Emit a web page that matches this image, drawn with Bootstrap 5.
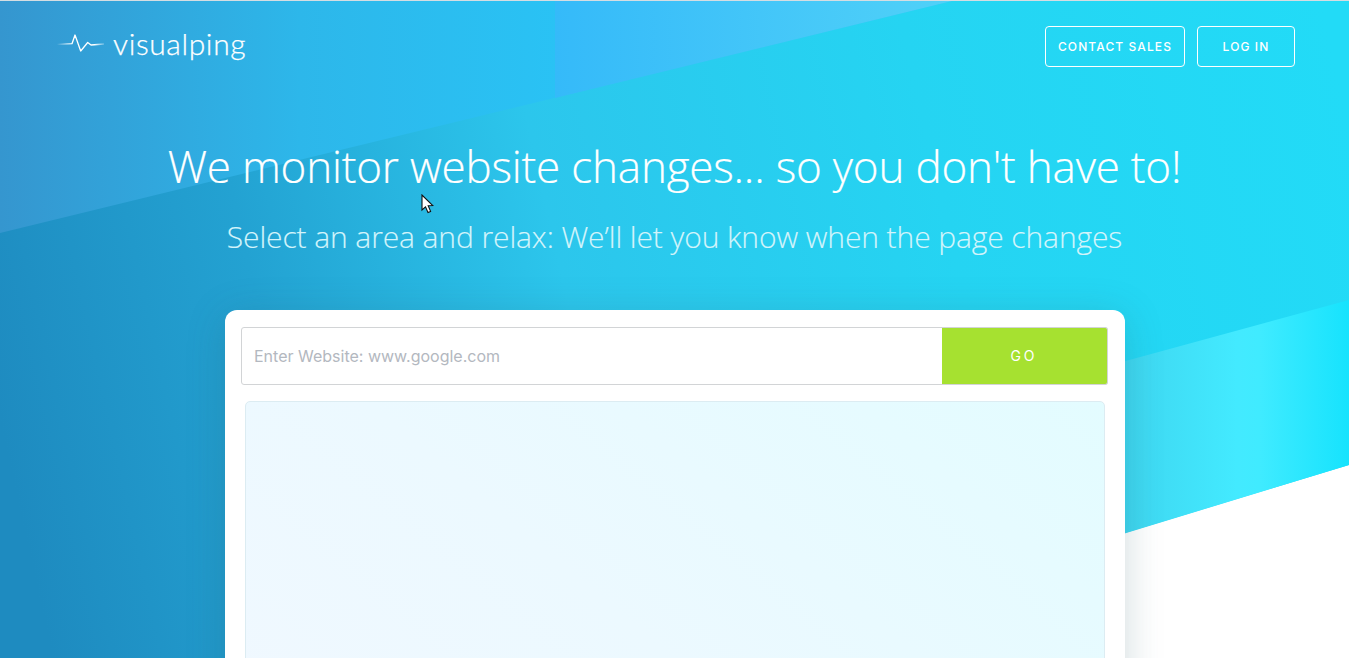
<!DOCTYPE html>
<html lang="en">
<head>
<meta charset="utf-8">
<title>visualping</title>
<link href="https://cdn.jsdelivr.net/npm/bootstrap@5.3.0/dist/css/bootstrap.min.css" rel="stylesheet">
<style>
html,body{height:100%;overflow:hidden;background:#fff}
.vp-hero{position:relative;height:658px;overflow:hidden;border-top:1px solid #d5dde2;margin-right:1px}
.vp-bg{position:absolute;left:0;top:0;width:1349px;height:658px}
.vp-content{position:relative}
.vp-nav{padding:0 54px 0 57px;height:66px;margin-top:25px}
.vp-logo{gap:9px;color:#fff;text-decoration:none;font-family:Lato,sans-serif;font-size:30px;font-weight:300;line-height:1;margin-top:3px;-webkit-text-stroke:.25px #fff}
.vp-logo:hover{color:#fff}
.vp-wordmark{letter-spacing:.6px;margin-top:-1px}
.vp-actions{gap:12px}
.vp-btn{font-family:Inter,sans-serif;font-size:12px;font-weight:500;letter-spacing:1.1px;color:#fff;border:1px solid #fff;border-radius:4px;height:41px;display:flex;align-items:center;justify-content:center;padding:0;text-transform:uppercase}
.vp-btn:hover{color:#fff;border-color:#fff}
.vp-btn-a{width:140px}
.vp-btn-b{width:98px}
.vp-title{font-family:"Open Sans",sans-serif;font-weight:300;font-size:44px;line-height:60px;color:#fff;margin:44px 0 0;letter-spacing:-.2px;-webkit-text-stroke:.2px #fff}
.vp-sub{font-family:"Open Sans",sans-serif;font-weight:300;font-size:30px;line-height:40px;color:#d3f4fb;margin:21px 0 0;letter-spacing:-.1px;-webkit-text-stroke:.15px #d3f4fb}
.vp-card{width:900px;margin:53px auto 0;padding:17px 17px 0 16px;border:0;border-radius:12px;height:500px;box-shadow:0 6px 38px rgba(40,90,100,.22)}
.vp-group{height:59px}
.vp-input{font-family:Inter,sans-serif;font-size:16px;border-color:#d2d4d6;border-radius:3px 0 0 3px;padding:0 12.5px}
.vp-input::placeholder{color:#b3b8c0}
.vp-go{width:166px;background:#a6e130;color:#fff;font-family:Inter,sans-serif;font-size:14px;letter-spacing:3px;border:1px solid #d2d4d6;border-left:0;border-radius:0 3px 3px 0;padding:0}
.vp-go:hover{background:#a6e130;color:#fff}
.vp-pane{margin:16px 3px 0 4px;height:420px;border:1px solid #dcecf2;border-radius:5px;background:linear-gradient(40deg,#f1f8ff 0%,#ecf9ff 45%,#e3fcff 100%)}
.vp-cursor{position:absolute;left:421px;top:193px;width:13px;height:21px}
</style>
</head>
<body>
<div class="vp-hero">
  <svg class="vp-bg" viewBox="0 0 1349 658" aria-hidden="true">
    <defs>
      <linearGradient id="g1" gradientUnits="userSpaceOnUse" x1="0" y1="420" x2="1349" y2="120">
        <stop offset="0" stop-color="#1e8bc0"/><stop offset=".2" stop-color="#23a2d2"/><stop offset=".42" stop-color="#2cc6ec"/><stop offset=".7" stop-color="#25d4f2"/><stop offset="1" stop-color="#22dbf7"/>
      </linearGradient>
      <linearGradient id="g2" gradientUnits="userSpaceOnUse" x1="0" y1="60" x2="600" y2="60">
        <stop offset="0" stop-color="#3596cf"/><stop offset=".5" stop-color="#2db7ea"/><stop offset="1" stop-color="#29c4f6"/>
      </linearGradient>
      <linearGradient id="g3" gradientUnits="userSpaceOnUse" x1="555" y1="0" x2="950" y2="0">
        <stop offset="0" stop-color="#35baf9"/><stop offset="1" stop-color="#50d1f8"/>
      </linearGradient>
      <linearGradient id="g4" gradientUnits="userSpaceOnUse" x1="1125" y1="0" x2="1349" y2="0">
        <stop offset="0" stop-color="#3ed6f0"/><stop offset=".5" stop-color="#43eaff"/><stop offset=".6" stop-color="#40ebff"/><stop offset="1" stop-color="#16e3fd"/>
      </linearGradient>
    </defs>
    <rect width="1349" height="658" fill="#fff"/>
    <polygon points="0,0 1349,0 1349,464 0,873" fill="url(#g1)"/>
    <polygon points="0,0 952,0 0,232" fill="url(#g2)"/>
    <polygon points="555,0 952,0 555,97" fill="url(#g3)"/>
    <polygon points="1100,367 1349,299 1349,464 1100,540" fill="url(#g4)"/>
  </svg>
  <div class="vp-content">
    <nav class="navbar vp-nav d-flex justify-content-between align-items-start flex-nowrap">
      <a class="vp-logo d-flex align-items-center" href="#">
        <svg width="47" height="20" viewBox="0 0 47 20" aria-hidden="true">
          <defs>
            <linearGradient id="lg1" gradientUnits="userSpaceOnUse" x1="0" y1="0" x2="47" y2="0"><stop offset="0" stop-color="#fff" stop-opacity="0"/><stop offset=".3" stop-color="#fff"/><stop offset=".8" stop-color="#fff"/><stop offset="1" stop-color="#fff" stop-opacity=".25"/></linearGradient>
          </defs>
          <path d="M0 10.3 L15 9.7 L18 1 L23.7 17 L30.7 8.5 L34 11 L47 10" fill="none" stroke="url(#lg1)" stroke-width="1.3" stroke-linejoin="round"/>
        </svg>
        <span class="vp-wordmark">visualping</span>
      </a>
      <div class="d-flex vp-actions">
        <a href="#" class="btn vp-btn vp-btn-a">Contact Sales</a>
        <a href="#" class="btn vp-btn vp-btn-b">Log In</a>
      </div>
    </nav>
    <h1 class="vp-title text-center">We monitor website changes... so you don't have to!</h1>
    <p class="vp-sub text-center">Select an area and relax: We’ll let you know when the page changes</p>
    <div class="card vp-card">
      <div class="input-group vp-group">
        <input type="text" class="form-control vp-input" placeholder="Enter Website: www.google.com">
        <button class="btn vp-go" type="button">GO</button>
      </div>
      <div class="vp-pane"></div>
    </div>
  </div>
  <svg class="vp-cursor" viewBox="0 0 13 21" aria-hidden="true"><path d="M1 1 L1 16 L4.5 12.8 L7 18.5 L9.6 17.4 L7.2 11.8 L11.8 11.6 Z" fill="#fff" stroke="#111" stroke-width="1.1" stroke-linejoin="miter"/></svg>
</div>
<script src="https://cdn.jsdelivr.net/npm/bootstrap@5.3.0/dist/js/bootstrap.bundle.min.js"></script>
</body>
</html>
